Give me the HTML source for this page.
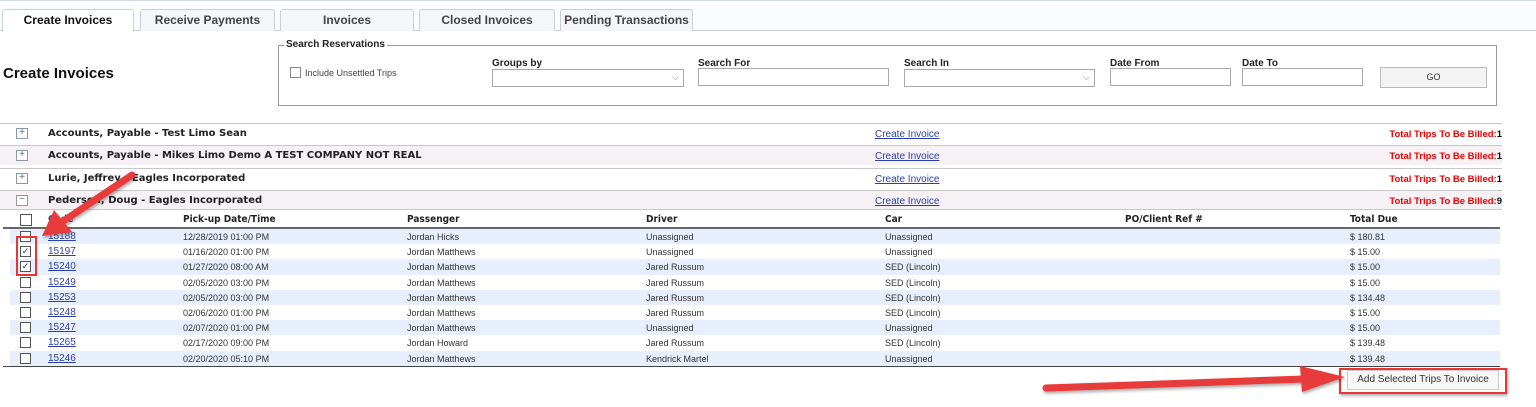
<!DOCTYPE html>
<html><head><meta charset="utf-8"><style>
*{margin:0;padding:0;box-sizing:border-box}
body{width:1536px;height:407px;background:#fff;font-family:"Liberation Sans",sans-serif;position:relative;overflow:hidden;font-size:11px;color:#222}
.a{position:absolute}
.tab{position:absolute;top:9px;height:22px;border:1px solid #c8d0da;border-bottom:none;background:#f4f6f9;font-size:12px;font-weight:bold;color:#444;text-align:center;line-height:20px;border-radius:3px 3px 0 0}
.lbl{position:absolute;font-family:"Liberation Sans Narrow","Liberation Sans",sans-serif;font-weight:bold;font-size:10px;color:#222;top:58px}
.inp{position:absolute;top:68px;height:18px;border:1px solid #a9a9a9;background:#fff}
.grp{position:absolute;left:0;width:1502px;height:20px;border-top:1px solid #c8c8c8}
.grp .pm{position:absolute;left:16px;top:4px;width:12px;height:11px;border:1px solid #8a98aa;font-size:10px;line-height:8px;text-align:center;color:#667;background:#fff}
.grp .n{position:absolute;left:48px;top:4px;font-family:"DejaVu Sans",sans-serif;font-weight:bold;font-size:10px;color:#222}
.grp .c{position:absolute;left:875px;top:5px;color:#2b3fa8;text-decoration:underline;font-size:10px}
.grp .t{position:absolute;right:0;top:5px;color:#e00;font-weight:bold;font-size:9.5px;font-family:"Liberation Sans Narrow","Liberation Sans",sans-serif}
.grp .t b{color:#111}
.row{position:absolute;left:10px;width:1490px;height:15.2px;font-size:9px;color:#333}
.row span{position:absolute;top:3px}
.cb{position:absolute;left:10px;width:11px;height:11px;border:1px solid #555;background:#fff;font-size:9px;line-height:9px;text-align:center;color:#333}
.hd{position:absolute;top:214px;font-weight:bold;font-size:10px;color:#222;font-family:"DejaVu Sans Condensed","Liberation Sans",sans-serif}
</style></head><body>
<div class="a" style="left:0;top:0;width:1536px;height:31px;background:#fbfcfe;border-top:1px solid #d5dde8;border-bottom:1px solid #c8d0da"></div>
<div class="tab" style="left:2px;width:132px;background:#fff;height:23px;color:#111">Create Invoices</div>
<div class="tab" style="left:140px;width:135px">Receive Payments</div>
<div class="tab" style="left:280px;width:134px">Invoices</div>
<div class="tab" style="left:419px;width:136px">Closed Invoices</div>
<div class="tab" style="left:560px;width:133px">Pending Transactions</div>

<div class="a" style="left:3px;top:65px;font-size:15px;font-weight:bold;color:#111">Create Invoices</div>
<div class="a" style="left:278px;top:45px;width:1219px;height:61px;border:1px solid #999"></div>
<div class="a" style="left:284px;top:39px;background:#fff;padding:0 2px;font-size:10px;font-weight:bold;font-family:'Liberation Sans Narrow','Liberation Sans',sans-serif">Search Reservations</div>
<div class="a" style="left:290px;top:67px;width:11px;height:11px;border:1px solid #888"></div>
<div class="a" style="left:305px;top:68px;font-size:9px;color:#444;font-family:'Liberation Sans Narrow','Liberation Sans',sans-serif">Include Unsettled Trips</div>
<div class="lbl" style="left:492px">Groups by</div>
<div class="inp" style="left:492px;width:192px;top:69px"><span class="a" style="right:4px;top:2px;font-size:9px;color:#888">⌵</span></div>
<div class="lbl" style="left:698px">Search For</div>
<div class="inp" style="left:698px;width:191px"></div>
<div class="lbl" style="left:904px">Search In</div>
<div class="inp" style="left:904px;width:191px;top:69px"><span class="a" style="right:4px;top:2px;font-size:9px;color:#888">⌵</span></div>
<div class="lbl" style="left:1110px">Date From</div>
<div class="inp" style="left:1110px;width:121px"></div>
<div class="lbl" style="left:1242px">Date To</div>
<div class="inp" style="left:1242px;width:121px"></div>
<div class="a" style="left:1380px;top:67px;width:107px;height:21px;border:1px solid #bbb;background:#f3f3f3;text-align:center;line-height:19px;font-size:9px;color:#333">GO</div>

<div class="grp" style="top:123px;background:#fff"><div class="pm">+</div><div class="n">Accounts, Payable - Test Limo Sean</div><div class="c">Create Invoice</div><div class="t">Total Trips To Be Billed:<b>1</b></div></div>
<div class="grp" style="top:145px;background:#f6f1f4"><div class="pm">+</div><div class="n">Accounts, Payable - Mikes Limo Demo A TEST COMPANY NOT REAL</div><div class="c">Create Invoice</div><div class="t">Total Trips To Be Billed:<b>1</b></div></div>
<div class="grp" style="top:168px;background:#fff"><div class="pm">+</div><div class="n">Lurie, Jeffrey - Eagles Incorporated</div><div class="c">Create Invoice</div><div class="t">Total Trips To Be Billed:<b>1</b></div></div>
<div class="grp" style="top:190px;background:#f6f1f4;border-bottom:1px solid #c8c8c8"><div class="pm">−</div><div class="n">Pederson, Doug - Eagles Incorporated</div><div class="c">Create Invoice</div><div class="t">Total Trips To Be Billed:<b>9</b></div></div>

<div class="cb" style="left:20px;top:214px;width:12px;height:12px"></div>
<div class="hd" style="left:48px;color:#2b3fa8">Code</div>
<div class="hd" style="left:183px">Pick-up Date/Time</div>
<div class="hd" style="left:407px">Passenger</div>
<div class="hd" style="left:646px">Driver</div>
<div class="hd" style="left:885px">Car</div>
<div class="hd" style="left:1125px">PO/Client Ref #</div>
<div class="hd" style="left:1350px">Total Due</div>
<div class="a" style="left:3px;top:227px;width:1497px;height:2px;background:#666"></div>

<div id="rows"></div>
<div class="a" style="left:3px;top:366px;width:1497px;height:1px;background:#444"></div>

<div class="a" style="left:1347px;top:370px;width:152px;height:20px;border:1px solid #ccc;background:#f7f7f7;font-size:10px;color:#333;text-align:center;line-height:18px">Add Selected Trips To Invoice</div>
<div class="a" style="left:1339px;top:368px;width:168px;height:26px;border:2px solid #e33;box-shadow:1px 2px 3px rgba(0,0,0,.3)"></div>
<div class="a" style="left:16px;top:236px;width:21px;height:40px;border:2px solid #e33"></div>

<svg class="a" style="left:0;top:0" width="1536" height="407">
<defs><filter id="s"><feDropShadow dx="1" dy="2" stdDeviation="1.5" flood-opacity=".35"/></filter></defs>
<g fill="#e83a3a" filter="url(#s)">
<line x1="132" y1="175" x2="62" y2="222" stroke="#e83a3a" stroke-width="7" stroke-linecap="round"/>
<polygon points="42,236 54,210 72,232"/>
<line x1="1046" y1="388" x2="1305" y2="379" stroke="#e83a3a" stroke-width="7" stroke-linecap="round"/>
<polygon points="1345,377 1300,366 1302,392"/>
</g>
</svg>
<script>
var d=[["15188","12/28/2019 01:00 PM","Jordan Hicks","Unassigned","Unassigned","$ 180.81",0],
["15197","01/16/2020 01:00 PM","Jordan Matthews","Unassigned","Unassigned","$ 15.00",1],
["15240","01/27/2020 08:00 AM","Jordan Matthews","Jared Russum","SED (Lincoln)","$ 15.00",1],
["15249","02/05/2020 03:00 PM","Jordan Matthews","Jared Russum","SED (Lincoln)","$ 15.00",0],
["15253","02/05/2020 03:00 PM","Jordan Matthews","Jared Russum","SED (Lincoln)","$ 134.48",0],
["15248","02/06/2020 01:00 PM","Jordan Matthews","Jared Russum","SED (Lincoln)","$ 15.00",0],
["15247","02/07/2020 01:00 PM","Jordan Matthews","Unassigned","Unassigned","$ 15.00",0],
["15265","02/17/2020 09:00 PM","Jordan Howard","Jared Russum","SED (Lincoln)","$ 139.48",0],
["15246","02/20/2020 05:10 PM","Jordan Matthews","Kendrick Martel","Unassigned","$ 139.48",0]];
var h="";d.forEach(function(r,i){var t=229+i*15.2;
h+='<div class="row" style="top:'+t+'px;background:'+(i%2==0?'#e6effb':'#fff')+'"><div class="cb" style="top:2px">'+(r[6]?'✓':'')+'</div><span style="left:38px;color:#2b3fa8;text-decoration:underline;font-size:10px;top:2px">'+r[0]+'</span><span style="left:173px">'+r[1]+'</span><span style="left:397px">'+r[2]+'</span><span style="left:636px">'+r[3]+'</span><span style="left:875px">'+r[4]+'</span><span style="left:1340px">'+r[5]+'</span></div>';});
document.getElementById("rows").innerHTML=h;
</script>
</body></html>
